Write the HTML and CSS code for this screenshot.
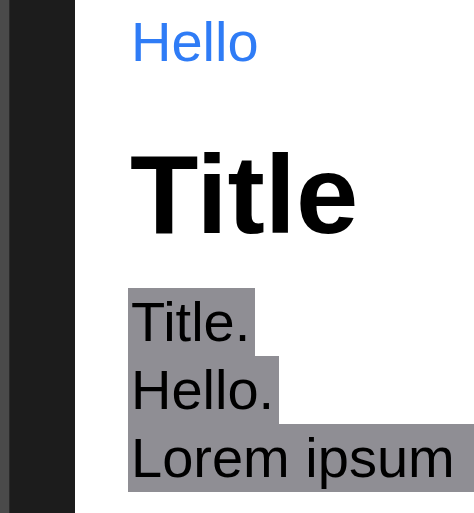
FILE: index.html
```html
<!DOCTYPE html>
<html>
<head>
    <meta charset="UTF-8">
    <title>Text Selection</title>
    <link rel="stylesheet" href="styles.css">
</head>
<body>
    <div class="sidebar">
        <div class="edge"></div>
    </div>
    <div class="content">
        <div class="link">Hello</div>
        <h1>Title</h1>
        <div class="selection">
            <span class="line">Title.</span>
            <span class="line">Hello.</span>
            <span class="line last">Lorem ipsum</span>
        </div>
    </div>
</body>
</html>
```

FILE: styles.css
```css
body {
    font-family: "Liberation Sans", Arial, sans-serif;
    margin: 0;
    height: 100vh;
    display: flex;
    overflow: hidden;
    background: #fff;
    color: #000;
}
.sidebar {
    width: 75px;
    flex-shrink: 0;
    background: #1c1c1c;
    display: flex;
}
.edge {
    width: 9px;
    background: #4a4a4a;
    border-right: 1px solid #2a2a2a;
}
.content {
    flex: 1;
    padding-left: 53px;
    min-width: 0;
}
.link {
    color: #2f7cf6;
    font-size: 56px;
    line-height: 68px;
    margin-top: 8px;
    padding-left: 3px;
}
h1 {
    font-size: 112px;
    line-height: 1;
    font-weight: bold;
    margin: 63px 0 0;
    padding-left: 2px;
}
.selection {
    margin-top: 37px;
    font-size: 56px;
    line-height: 68px;
    white-space: nowrap;
}
.line {
    display: block;
    width: max-content;
    height: 68px;
    background: #8f8e94;
    padding: 0 5px 0 3px;
}
.line.last {
    padding-right: 40px;
}
```
